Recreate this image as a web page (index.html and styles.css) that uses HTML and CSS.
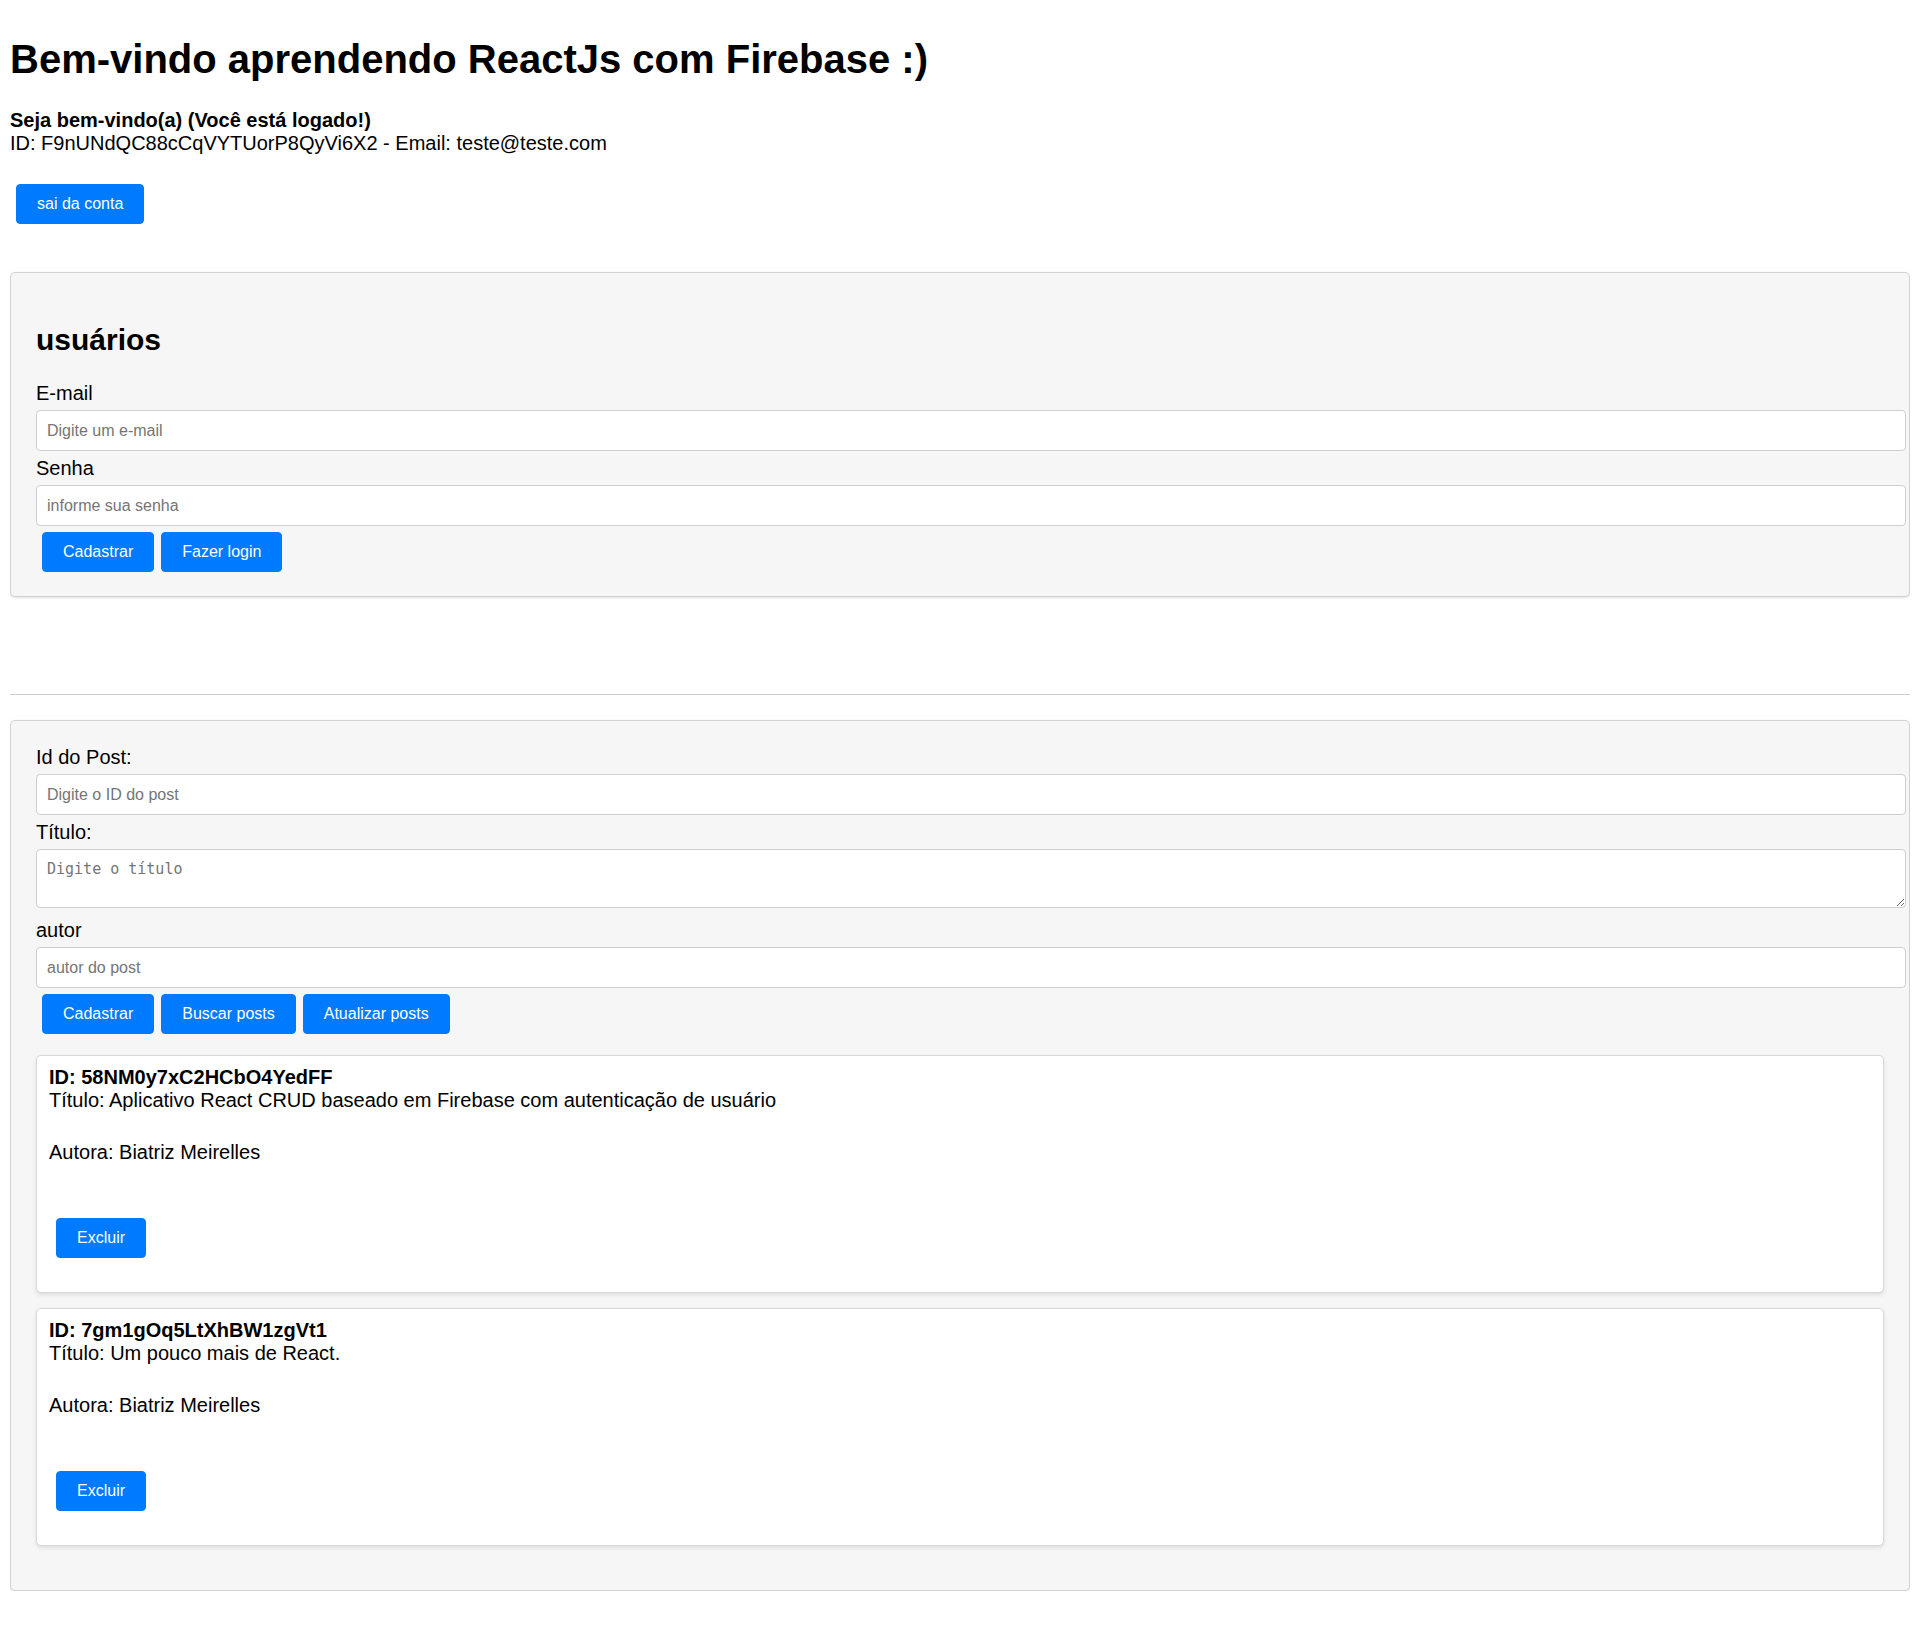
FILE: index.html
```html
<!DOCTYPE html>
<html lang="pt-BR">
<head>
<meta charset="utf-8">
<title>ReactJs com Firebase</title>
<link rel="stylesheet" href="styles.css">
</head>
<body>
  <h1 class="page-title">Bem-vindo aprendendo ReactJs com Firebase :)</h1>

  <div class="session">
    <strong class="session-welcome">Seja bem-vindo(a) (Você está logado!)</strong>
    <span class="session-info">ID: F9nUNdQC88cCqVYTUorP8QyVi6X2 - Email: teste@teste.com</span>
  </div>

  <div class="logout-row">
    <button class="btn" type="button">sai da conta</button>
  </div>

  <section class="panel panel-users">
    <h2 class="panel-title">usuários</h2>
    <label class="field-label">E-mail</label>
    <input class="field-input" type="text" placeholder="Digite um e-mail">
    <label class="field-label">Senha</label>
    <input class="field-input" type="password" placeholder="informe sua senha">
    <div class="btn-row">
      <button class="btn" type="button">Cadastrar</button>
      <button class="btn" type="button">Fazer login</button>
    </div>
  </section>

  <hr class="divider">

  <section class="panel panel-posts">
    <label class="field-label">Id do Post:</label>
    <input class="field-input" type="text" placeholder="Digite o ID do post">
    <label class="field-label">Título:</label>
    <textarea class="field-input field-textarea" placeholder="Digite o título"></textarea>
    <label class="field-label">autor</label>
    <input class="field-input" type="text" placeholder="autor do post">
    <div class="btn-row">
      <button class="btn" type="button">Cadastrar</button>
      <button class="btn" type="button">Buscar posts</button>
      <button class="btn" type="button">Atualizar posts</button>
    </div>

    <ul class="post-list">
      <li class="post-card">
        <strong class="post-id">ID: 58NM0y7xC2HCbO4YedFF</strong>
        <span class="post-title">Título: Aplicativo React CRUD baseado em Firebase com autenticação de usuário</span>
        <span class="post-author">Autora: Biatriz Meirelles</span>
        <button class="btn btn-delete" type="button">Excluir</button>
      </li>
      <li class="post-card">
        <strong class="post-id">ID: 7gm1gOq5LtXhBW1zgVt1</strong>
        <span class="post-title">Título: Um pouco mais de React.</span>
        <span class="post-author">Autora: Biatriz Meirelles</span>
        <button class="btn btn-delete" type="button">Excluir</button>
      </li>
    </ul>
  </section>
</body>
</html>
```

FILE: styles.css
```css
body {
  margin: 8px 10px;
  font-family: "Liberation Sans", Arial, sans-serif;
  font-size: 20px;
  line-height: 23px;
  color: #000;
  background: #fff;
}

.page-title {
  font-size: 40px;
  line-height: 46px;
  font-weight: bold;
  margin: 28px 0 27px;
}

.session {
  display: flex;
  flex-direction: column;
}

.session-welcome {
  font-weight: bold;
}

.logout-row {
  display: flex;
  margin: 29px 0 0 6px;
}

.btn {
  font-family: "Liberation Sans", Arial, sans-serif;
  font-size: 16px;
  line-height: 18px;
  padding: 10px 20px;
  border: 1px solid #007bff;
  border-radius: 4px;
  background: #007bff;
  color: #fff;
  cursor: pointer;
}

.panel {
  margin: 48px 0 0;
  padding: 25px 25px 24px;
  border: 1px solid #d2d2d2;
  border-radius: 5px;
  background: #f6f6f6;
  box-shadow: 0 1px 3px rgba(0, 0, 0, 0.12);
}

.panel-title {
  font-size: 30px;
  line-height: 34px;
  font-weight: bold;
  margin: 25px 0;
}

.field-label {
  display: block;
  margin-bottom: 5px;
}

.field-input {
  display: block;
  box-sizing: content-box;
  width: 100%;
  margin: 0 0 6px;
  padding: 10px;
  border: 1px solid #cfcfcf;
  border-radius: 4px;
  background: #fff;
  font-family: "Liberation Sans", Arial, sans-serif;
  font-size: 16px;
  line-height: 19px;
  color: #000;
}

.field-input::placeholder {
  color: #757575;
}

.field-textarea {
  height: 37px;
  margin-bottom: 11px;
  font-family: "DejaVu Sans Mono", monospace;
  font-size: 15px;
  line-height: 18px;
}

.btn-row {
  display: flex;
  gap: 7px;
  padding-left: 6px;
}

.divider {
  height: 0;
  margin: 97px 0 0;
  border: 0;
  border-top: 1px solid #cccccc;
}

.panel-posts {
  margin-top: 25px;
}

.post-list {
  list-style: none;
  margin: 21px 0 20px;
  padding: 0;
  display: flex;
  flex-direction: column;
  gap: 15px;
}

.post-card {
  display: flex;
  flex-direction: column;
  align-items: flex-start;
  padding: 10px 12px 34px;
  border: 1px solid #d8d8d8;
  border-radius: 5px;
  background: #fff;
  box-shadow: 0 2px 4px rgba(0, 0, 0, 0.1);
}

.post-id {
  font-weight: bold;
}

.post-author {
  margin-top: 29px;
}

.btn-delete {
  margin: 54px 0 0 7px;
}
```
